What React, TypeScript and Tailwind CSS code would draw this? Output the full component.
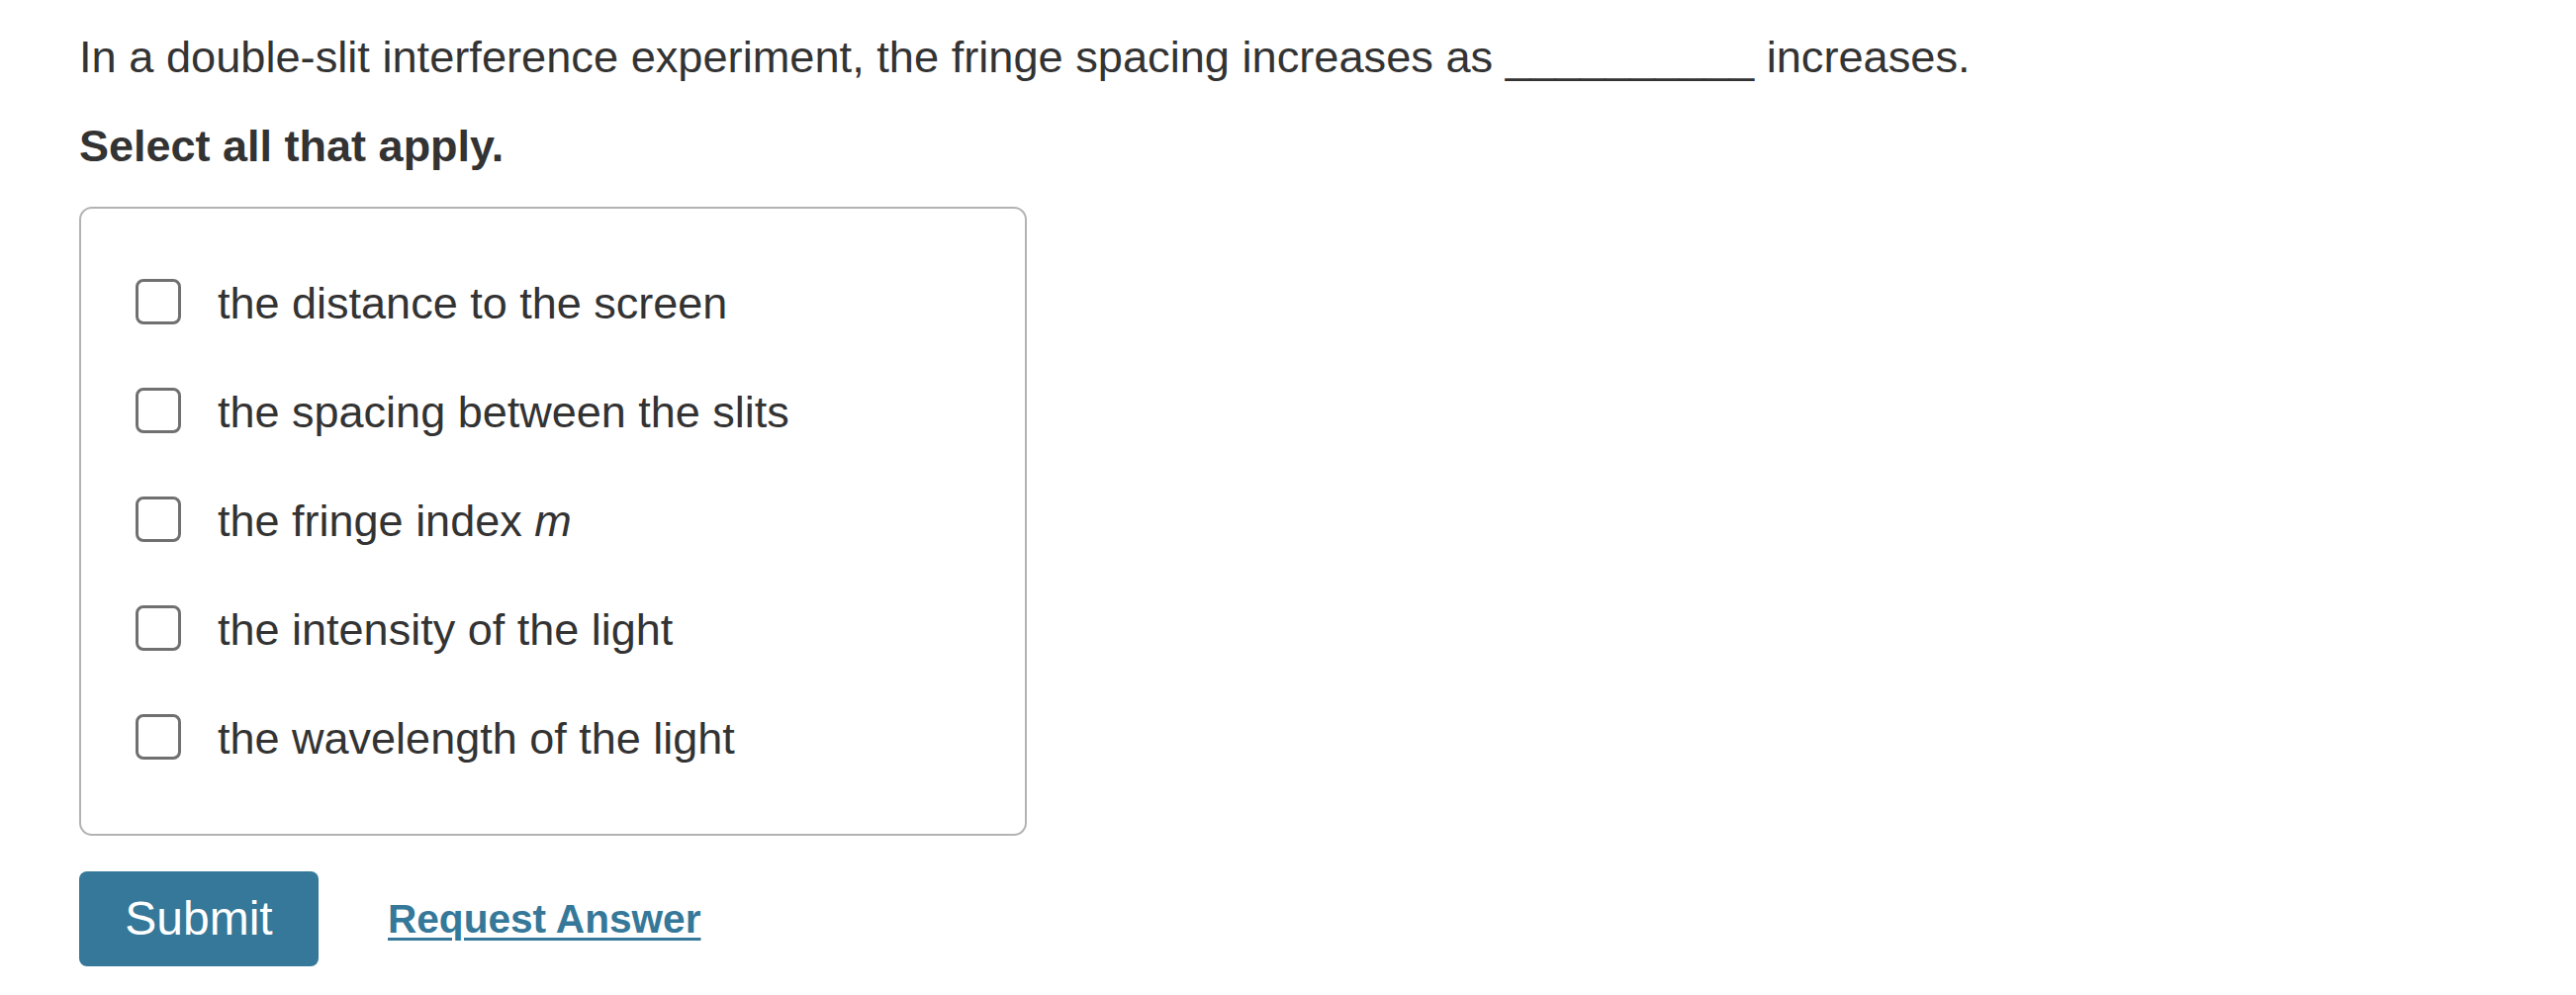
import React from "react";

const options: React.ReactNode[] = [
  "the distance to the screen",
  "the spacing between the slits",
  <>
    the fringe index <i>m</i>
  </>,
  "the intensity of the light",
  "the wavelength of the light",
];

export default function App() {
  return (
    <div className="min-h-[1006px] w-full bg-white pl-[80px] pt-[32px] font-['Liberation_Sans',Arial,Helvetica,sans-serif] text-[#333333]">
      <p className="text-[45.2px] leading-[52px]">
        In a double-slit interference experiment, the fringe spacing increases as __________ increases.
      </p>
      <p className="mt-[38px] text-[45px] font-bold leading-[52px]">Select all that apply.</p>

      <div className="mt-[35px] flex w-[958px] flex-col gap-[54px] rounded-[13px] border-2 border-[#b3b3b3] pb-[70px] pl-[55px] pt-[66px]">
        {options.map((opt, i) => (
          <label key={i} className="flex items-center gap-[37px]">
            <span className="block h-[46px] w-[46px] shrink-0 rounded-[8px] border-[3px] border-[#707070] bg-white" />
            <span className="pt-[4px] text-[45px] leading-[52px]">{opt}</span>
          </label>
        ))}
      </div>

      <div className="mt-[36px] flex items-center gap-[70px]">
        <button className="flex h-[96px] w-[242px] items-center justify-center rounded-[8px] bg-[#357899] text-[48px] leading-[56px] text-white">
          Submit
        </button>
        <a
          href="#"
          className="text-[40.6px] font-bold leading-[46px] text-[#357899] underline decoration-[3px] underline-offset-[5px]"
        >
          Request Answer
        </a>
      </div>
    </div>
  );
}
